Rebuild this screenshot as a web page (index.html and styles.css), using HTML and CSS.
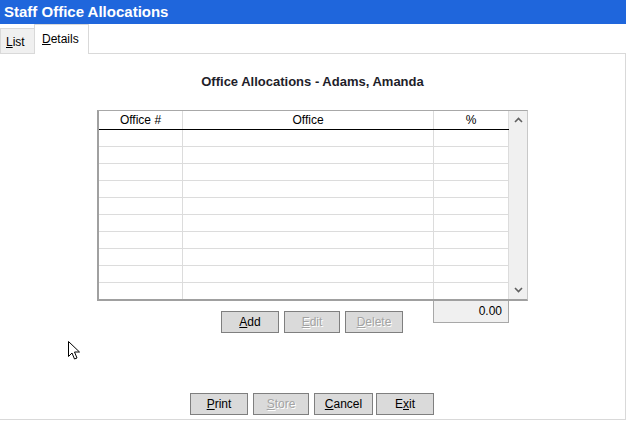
FILE: index.html
```html
<!DOCTYPE html>
<html>
<head>
<meta charset="utf-8">
<link rel="stylesheet" href="styles.css">
</head>
<body>
<div class="titlebar">Staff Office Allocations</div>
<div class="tabs">
  <div class="tab tab-list"><u>L</u>ist</div>
  <div class="tab tab-active"><u>D</u>etails</div>
</div>
<div class="panel">
  <h1 class="heading">Office Allocations - Adams, Amanda</h1>
  <div class="grid">
    <div class="table">
      <div class="row head">
        <div class="cell c1">Office #</div>
        <div class="cell c2">Office</div>
        <div class="cell c3">%</div>
      </div>
      <div class="row"><div class="cell c1"></div><div class="cell c2"></div><div class="cell c3"></div></div>
      <div class="row"><div class="cell c1"></div><div class="cell c2"></div><div class="cell c3"></div></div>
      <div class="row"><div class="cell c1"></div><div class="cell c2"></div><div class="cell c3"></div></div>
      <div class="row"><div class="cell c1"></div><div class="cell c2"></div><div class="cell c3"></div></div>
      <div class="row"><div class="cell c1"></div><div class="cell c2"></div><div class="cell c3"></div></div>
      <div class="row"><div class="cell c1"></div><div class="cell c2"></div><div class="cell c3"></div></div>
      <div class="row"><div class="cell c1"></div><div class="cell c2"></div><div class="cell c3"></div></div>
      <div class="row"><div class="cell c1"></div><div class="cell c2"></div><div class="cell c3"></div></div>
      <div class="row"><div class="cell c1"></div><div class="cell c2"></div><div class="cell c3"></div></div>
      <div class="row last"><div class="cell c1"></div><div class="cell c2"></div><div class="cell c3"></div></div>
    </div>
    <div class="scrollbar">
      <svg class="arrow" width="9" height="6" viewBox="0 0 9 6"><path d="M1 5 L4.5 1.5 L8 5" fill="none" stroke="#606060" stroke-width="1.6"/></svg>
      <svg class="arrow" width="9" height="6" viewBox="0 0 9 6"><path d="M1 1 L4.5 4.5 L8 1" fill="none" stroke="#606060" stroke-width="1.6"/></svg>
    </div>
  </div>
  <div class="under">
    <div class="btns">
      <button class="btn w58"><u>A</u>dd</button>
      <button class="btn w56 off"><u>E</u>dit</button>
      <button class="btn w58 off"><u>D</u>elete</button>
    </div>
    <div class="total">0.00</div>
  </div>
  <div class="footer">
    <button class="btn w58"><u>P</u>rint</button>
    <button class="btn w56 off"><u>S</u>tore</button>
    <button class="btn w59"><u>C</u>ancel</button>
    <button class="btn w58 tight">E<u>x</u>it</button>
  </div>
</div>
<svg class="cursor" width="14" height="20" viewBox="0 0 14 20"><path d="M0.5 0.5 L0.5 15.5 L4 12 L6.5 18 L9 17 L6.5 11 L11.5 11 Z" fill="#fff" stroke="#000" stroke-width="1"/></svg>
</body>
</html>
```

FILE: styles.css
```css
* { box-sizing: border-box; }
html, body { margin: 0; padding: 0; }
body {
  width: 626px;
  height: 421px;
  background: #fff;
  font-family: "Liberation Sans", Arial, sans-serif;
  font-size: 12px;
  color: #000;
  position: relative;
  overflow: hidden;
}
.titlebar {
  height: 24px;
  background: #1f66dc;
  color: #fff;
  font-weight: bold;
  font-size: 15px;
  line-height: 24px;
  padding-left: 4px;
}
.tabs {
  height: 30px;
  display: flex;
  align-items: flex-end;
  position: relative;
  z-index: 1;
  margin-bottom: -1px;
}
.tab {
  border: 1px solid #d9d9d9;
}
.tab-list {
  width: 34px;
  height: 26px;
  background: #f0f0f0;
  line-height: 26px;
  border-right: none;
  padding-left: 5px;
}
.tab-active {
  width: 55px;
  height: 30px;
  background: #fff;
  border-bottom: none;
  line-height: 29px;
  padding-left: 7px;
}
.panel {
  height: 367px;
  border-top: 1px solid #d9d9d9;
  border-right: 1px solid #d9d9d9;
  border-bottom: 1px solid #d9d9d9;
  display: flex;
  flex-direction: column;
}
.heading {
  margin: 20px 0 0;
  height: 16px;
  line-height: 16px;
  font-size: 13px;
  font-weight: bold;
  text-align: center;
  color: #1e1e2a;
}
.grid {
  margin: 20px 0 0 97px;
  width: 431px;
  display: flex;
  border-top: 1px solid #a8a8a8;
  border-right: 1px solid #c8c8c8;
  border-left: 2px solid #a0a0a0;
  border-bottom: 2px solid #a0a0a0;
}
.table { width: 410px; }
.row {
  display: flex;
  height: 17px;
  border-bottom: 1px solid #dcdcdc;
}
.row.last { height: 16px; border-bottom: none; }
.row.head {
  height: 19px;
  border-bottom: 1px solid #000;
  line-height: 19px;
}
.cell {
  text-align: center;
  border-right: 1px solid #dcdcdc;
}
.c1 { width: 84px; }
.c2 { width: 251px; }
.c3 { width: 75px; }
.scrollbar {
  width: 18px;
  background: #f0f0f0;
  display: flex;
  flex-direction: column;
  justify-content: space-between;
  align-items: center;
  padding: 6px 0 6px;
}
.arrow { display: block; }
.under {
  display: flex;
  align-items: flex-start;
  margin-left: 97px;
  height: 32px;
}
.btns {
  display: flex;
  gap: 5px;
  margin: 10px 0 0 124px;
}
.btn {
  height: 22px;
  padding: 0;
  background: #dadada;
  border: 1px solid #7f7f7f;
  border-radius: 0;
  font-family: "Liberation Sans", Arial, sans-serif;
  font-size: 12px;
  color: #000;
  line-height: 20px;
}
.btn.off { color: #a3a3a3; text-shadow: 1px 1px 0 #fff; }
.w56 { width: 56px; }
.w58 { width: 58px; }
.w59 { width: 59px; }
.total {
  margin-left: 30px;
  width: 76px;
  height: 22px;
  background: #f0f0f0;
  border: 1px solid #a8a8a8;
  border-top: none;
  text-align: right;
  padding-right: 6px;
  line-height: 21px;
}
.footer {
  margin-top: auto;
  margin-bottom: 4px;
  display: flex;
  gap: 5px;
  margin-left: 190px;
}
.footer .tight { margin-left: -2px; }
.cursor {
  position: absolute;
  left: 68px;
  top: 341px;
}
```
